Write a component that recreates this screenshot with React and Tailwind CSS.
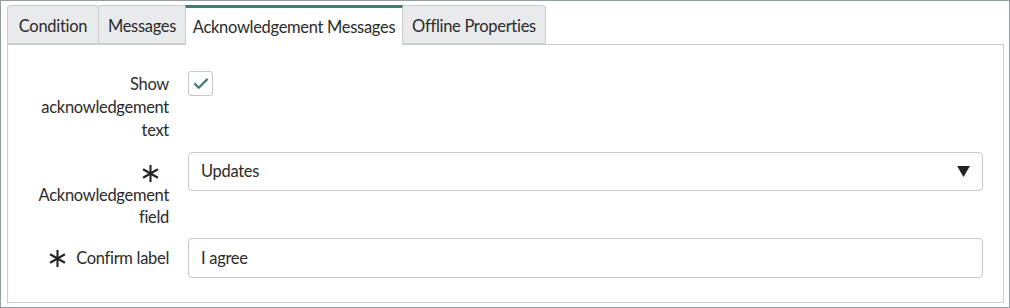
import { Check } from "lucide-react";

const tabs = [
  { name: "Condition", w: "w-[92px]" },
  { name: "Messages", w: "w-[88px]" },
  { name: "Acknowledgement Messages", w: "w-[218px]", active: true },
  { name: "Offline Properties", w: "w-[144px]" },
];

function Asterisk({ className = "" }) {
  return (
    <svg viewBox="0 0 20 20" className={"inline-block h-[19px] w-[19px] " + className}>
      <g stroke="#222" strokeWidth="2.2" strokeLinecap="butt">
        <line x1="10" y1="1" x2="10" y2="19" />
        <line x1="2.2" y1="5.5" x2="17.8" y2="14.5" />
        <line x1="2.2" y1="14.5" x2="17.8" y2="5.5" />
      </g>
    </svg>
  );
}

export default function App() {
  return (
    <div
      className="w-[1010px] h-[308px] border border-[#939ca1] bg-white pl-[6px] pt-[4px] pr-[5px] text-[#2b2b2b] tracking-[-0.3px]"
      style={{ fontFamily: "Lato, 'Noto Sans', sans-serif" }}
    >
      <div className="flex h-[39px]">
        {tabs.map((t) =>
          t.active ? (
            <div
              key={t.name}
              className={`${t.w} -ml-px h-[40px] flex items-center justify-center pt-[1px] bg-white border-t-[3px] border-t-[#3d7f74] border-x border-x-[#cdcdcd] text-[16.5px] relative z-10`}
            >
              {t.name}
            </div>
          ) : (
            <div
              key={t.name}
              className={`${t.w} -ml-px first:ml-0 h-[39px] flex items-center justify-center pt-[4px] bg-[#e9eaeb] border border-[#cdcdcd] rounded-t-[3px] text-[16.5px]`}
            >
              {t.name}
            </div>
          )
        )}
      </div>
      <div className="h-[259px] border border-[#cdcdcd] pt-[26px] pl-[26px] pr-[20px] flex flex-col gap-[10px] text-[16.5px]">
        <div className="flex gap-[19px]">
          <div className="w-[135px] pt-[2px] text-right leading-[23px]">
            Show acknowledgement text
          </div>
          <div>
            <div className="w-[25px] h-[25px] border border-[#c6c6c6] rounded-[3px] flex items-center justify-center">
              <Check size={18} strokeWidth={3.2} color="#3d7f74" />
            </div>
          </div>
        </div>
        <div className="flex gap-[19px]">
          <div className="w-[135px] pt-[10px] text-right leading-[22px]">
            <div className="h-[22px] flex justify-end items-center pr-[9px]">
              <Asterisk />
            </div>
            <div>Acknowledgement</div>
            <div>field</div>
          </div>
          <div className="flex-1">
            <div className="h-[39px] border border-[#c6c6c6] rounded-[4px] flex items-center justify-between pl-[12px] pr-[12px]">
              <span>Updates</span>
              <svg viewBox="0 0 14 12" className="w-[13px] h-[11px]">
                <polygon points="0,0 14,0 7,12" fill="#222" />
              </svg>
            </div>
          </div>
        </div>
        <div className="flex gap-[19px]">
          <div className="w-[135px] h-[40px] flex items-center justify-end whitespace-nowrap">
            <Asterisk className="mr-[9px]" />
            <span>Confirm label</span>
          </div>
          <div className="flex-1">
            <div className="h-[40px] border border-[#c6c6c6] rounded-[4px] flex items-center pl-[12px]">
              I agree
            </div>
          </div>
        </div>
      </div>
    </div>
  );
}
